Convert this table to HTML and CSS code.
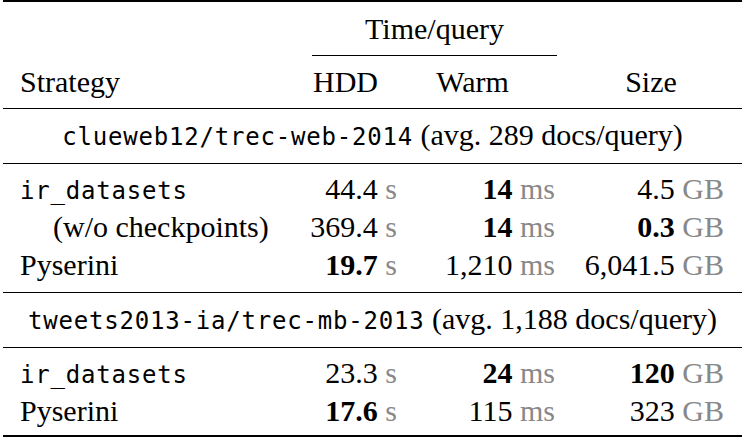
FILE: index.html
```html
<!DOCTYPE html>
<html lang="en">
<head>
  <meta charset="UTF-8" />
  <meta name="viewport" content="width=device-width, initial-scale=1" />
  <title>Retrieval cost: ir_datasets vs Pyserini</title>
  <link rel="stylesheet" href="styles.css">
</head>
<body>
  <table class="results">
    <colgroup>
      <col class="c-strategy">
      <col class="c-hdd">
      <col class="c-warm">
      <col class="c-size">
    </colgroup>
    <thead>
      <tr class="super-head">
        <th></th>
        <th colspan="2"><div class="cmid">Time/query</div></th>
        <th></th>
      </tr>
      <tr class="col-head">
        <th class="strategy">Strategy</th>
        <th class="hdd">HDD</th>
        <th class="warm">Warm</th>
        <th class="size">Size</th>
      </tr>
    </thead>

    <tbody>
      <tr class="dataset">
        <td colspan="4"><code>clueweb12/trec-web-2014</code> (avg. 289 docs/query)</td>
      </tr>
    </tbody>
    <tbody class="runs">
      <tr>
        <td class="name"><code>ir_datasets</code></td>
        <td class="hdd">44.4 <span class="unit">s</span></td>
        <td class="warm"><b>14</b> <span class="unit">ms</span></td>
        <td class="size">4.5 <span class="unit">GB</span></td>
      </tr>
      <tr>
        <td class="name sub">(w/o checkpoints)</td>
        <td class="hdd">369.4 <span class="unit">s</span></td>
        <td class="warm"><b>14</b> <span class="unit">ms</span></td>
        <td class="size"><b>0.3</b> <span class="unit">GB</span></td>
      </tr>
      <tr>
        <td class="name">Pyserini</td>
        <td class="hdd"><b>19.7</b> <span class="unit">s</span></td>
        <td class="warm">1,210 <span class="unit">ms</span></td>
        <td class="size">6,041.5 <span class="unit">GB</span></td>
      </tr>
    </tbody>

    <tbody>
      <tr class="dataset">
        <td colspan="4"><code>tweets2013-ia/trec-mb-2013</code> (avg. 1,188 docs/query)</td>
      </tr>
    </tbody>
    <tbody class="runs last">
      <tr>
        <td class="name"><code>ir_datasets</code></td>
        <td class="hdd">23.3 <span class="unit">s</span></td>
        <td class="warm"><b>24</b> <span class="unit">ms</span></td>
        <td class="size"><b>120</b> <span class="unit">GB</span></td>
      </tr>
      <tr>
        <td class="name">Pyserini</td>
        <td class="hdd"><b>17.6</b> <span class="unit">s</span></td>
        <td class="warm">115 <span class="unit">ms</span></td>
        <td class="size">323 <span class="unit">GB</span></td>
      </tr>
    </tbody>
  </table>
</body>
</html>
```

FILE: styles.css
```css
body {
  margin: 0;
  background: #fff;
  color: #000;
  font-family: "Liberation Serif", "Times New Roman", serif;
  font-size: 30px;
}

.results {
  margin-left: 3px;
  width: 739px;
  table-layout: fixed;
  border-collapse: separate;
  border-spacing: 0;
  border-top: 2px solid #000;
  border-bottom: 2px solid #000;
}

.c-strategy { width: 297px; }
.c-hdd      { width: 105px; }
.c-warm     { width: 160px; }
.c-size     { width: 177px; }

th, td {
  padding: 0;
  font-weight: normal;
  line-height: 30px;
  white-space: nowrap;
}

code {
  font-family: "DejaVu Sans Mono", "Liberation Mono", monospace;
  font-size: 24px;
  letter-spacing: 0.8px;
  line-height: 1;
}

b { font-weight: bold; }

.unit { color: #888; }

/* Header: spanning label with a partial rule under it */
.super-head th { padding: 0; }

.cmid {
  margin: 0 8px 0 12px;
  padding: 12px 0 11px;
  border-bottom: 1px solid #000;
  text-align: center;
}

.col-head th {
  padding-top: 11px;
  padding-bottom: 11px;
  border-bottom: 1px solid #000;
}

.col-head .strategy { text-align: left; padding-left: 17px; }
.col-head .hdd      { text-align: center; padding-right: 14px; }
.col-head .warm     { text-align: center; padding-right: 25px; }
.col-head .size     { text-align: center; padding-right: 5px; }

/* Dataset group rows */
.dataset td {
  padding: 11px 0 13px;
  text-align: center;
  border-bottom: 1px solid #000;
}

/* Result rows */
.runs td { line-height: 38px; }
.runs tr:first-child td { padding-top: 6px; }
.runs tr:last-child td {
  padding-bottom: 8px;
  border-bottom: 1px solid #000;
}
.runs.last tr:first-child td { padding-top: 6px; }
.runs.last tr:last-child td {
  padding-bottom: 5px;
  border-bottom: 0;
}

.runs .name { padding-left: 17px; }
.runs .name.sub { padding-left: 50px; }
.runs .hdd  { text-align: right; padding-right: 8px; }
.runs .warm { text-align: right; padding-right: 10px; }
.runs .size { text-align: right; padding-right: 18px; }
```
